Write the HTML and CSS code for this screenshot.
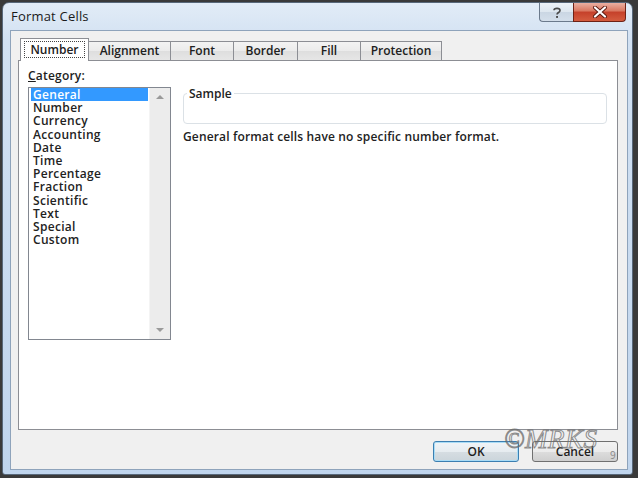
FILE: index.html
```html
<!DOCTYPE html>
<html>
<head>
<meta charset="utf-8">
<title>Format Cells</title>
<link rel="stylesheet" href="styles.css">
</head>
<body>
<div class="window">
  <div class="titlebar">
    <span class="title">Format Cells</span>
    <div class="caption">
      <div class="cap-btn help"><svg width="12" height="13" viewBox="0 0 12 13"><path d="M3 4.2 C3 1.8 9 1.6 9 4.4 C9 6.4 6 6.6 6 8.6" fill="none" stroke="#4a4a4a" stroke-width="1.6"/><rect x="5.1" y="10" width="1.9" height="1.9" fill="#4a4a4a"/></svg></div>
      <div class="cap-btn close"><svg width="16" height="12" viewBox="0 0 16 12"><path d="M3 1.5 L13 10.5 M13 1.5 L3 10.5" stroke="#5a1a10" stroke-width="4" stroke-linecap="round"/><path d="M3 1.5 L13 10.5 M13 1.5 L3 10.5" stroke="#ffffff" stroke-width="2.2" stroke-linecap="round"/></svg></div>
    </div>
  </div>
  <div class="frame-body">
    <div class="client">
      <div class="tabs">
        <div class="tab selected w-number"><span class="focus">Number</span></div>
        <div class="tab w-alignment">Alignment</div>
        <div class="tab w-font">Font</div>
        <div class="tab w-border">Border</div>
        <div class="tab w-fill">Fill</div>
        <div class="tab w-protection">Protection</div>
      </div>
      <div class="panel">
        <div class="left">
          <div class="label"><span class="ul">C</span>ategory:</div>
          <div class="listbox">
            <div class="items">
              <div class="item sel">General</div>
              <div class="item">Number</div>
              <div class="item">Currency</div>
              <div class="item">Accounting</div>
              <div class="item">Date</div>
              <div class="item">Time</div>
              <div class="item">Percentage</div>
              <div class="item">Fraction</div>
              <div class="item">Scientific</div>
              <div class="item">Text</div>
              <div class="item">Special</div>
              <div class="item">Custom</div>
            </div>
            <div class="scrollbar">
              <div class="arrow up"></div>
              <div class="arrow down"></div>
            </div>
          </div>
        </div>
        <div class="right">
          <fieldset class="sample"><legend>Sample</legend></fieldset>
          <div class="desc">General format cells have no specific number format.</div>
        </div>
      </div>
      <div class="footer">
        <div class="button default">OK</div>
        <div class="button">Cancel</div>
      </div>
    </div>
  </div>
  <div class="watermark">©MRKS</div>
  <div class="pagenum">9</div>
</div>
</body>
</html>
```

FILE: styles.css
```css
html, body {
  margin: 0;
  padding: 0;
}
body {
  width: 638px;
  height: 478px;
  overflow: hidden;
  background: #3a3a3a;
  font-family: "Open Sans", "Noto Sans", sans-serif;
  color: #1e1e1e;
}
.window {
  position: relative;
  margin: 2px 0 0 2px;
  width: 631px;
  height: 473px;
  box-sizing: border-box;
  border: 1px solid #58687a;
  border-radius: 7px 7px 3px 3px;
  background: linear-gradient(180deg, #e2ecf7 0%, #d2e1f2 8%, #c0d5ed 100%);
  display: flex;
  flex-direction: column;
}
.titlebar {
  height: 27px;
  flex: none;
  display: flex;
  justify-content: space-between;
  align-items: flex-start;
}
.title {
  padding: 4px 0 0 8px;
  font-size: 13px;
  line-height: 18px;
  letter-spacing: 0.2px;
  color: #1a1a1a;
}
.caption {
  display: flex;
  margin-right: 6px;
}
.cap-btn {
  height: 19px;
  box-sizing: border-box;
  display: flex;
  align-items: center;
  justify-content: center;
  border: 1px solid #6b7a8c;
  border-top: none;
}
.help {
  width: 34px;
  border-radius: 0 0 0 4px;
  border-right: none;
  background: linear-gradient(180deg, #eef3f8 0%, #dde6ef 50%, #cad6e3 51%, #d4dfeb 100%);
}
.close {
  width: 53px;
  border-radius: 0 0 4px 0;
  border-color: #6e2216;
  background: linear-gradient(180deg, #eab0a2 0%, #d9765f 45%, #c5402a 50%, #d45c3f 100%);
}
.frame-body {
  flex: 1;
  display: flex;
  padding: 0 4px 4px 7px;
}
.client {
  flex: 1;
  display: flex;
  flex-direction: column;
  background: #f0f0f0;
  border: 1px solid #8ea3bb;
  padding: 7px 9px 0 7px;
}
.tabs {
  height: 22px;
  display: flex;
  align-items: flex-start;
  flex: none;
}
.tab {
  box-sizing: border-box;
  height: 19px;
  margin-top: 3px;
  margin-left: -1px;
  border: 1px solid #8c8e94;
  border-bottom: none;
  background: linear-gradient(180deg, #f3f3f3 0%, #ebebeb 50%, #dedede 51%, #e6e6e6 100%);
  font-size: 12px;
  font-weight: 600;
  line-height: 15px;
  padding-top: 1px;
  text-align: center;
  color: #202020;
}
.tab.selected {
  position: relative;
  z-index: 1;
  height: 23px;
  margin-top: 0;
  margin-left: 2px;
  background: #ffffff;
  padding-top: 2px;
}
.focus {
  display: inline-block;
  border: 1px dotted #444;
  padding: 0 5px;
}
.w-number { width: 69px; }
.w-alignment { width: 83px; }
.w-font { width: 64px; }
.w-border { width: 65px; }
.w-fill { width: 64px; }
.w-protection { width: 82px; }
.panel {
  flex: none;
  height: 370px;
  box-sizing: border-box;
  background: #ffffff;
  border: 1px solid #8c8e94;
  display: flex;
  padding: 7px 10px 0 9px;
}
.left {
  display: flex;
  flex-direction: column;
}
.label {
  font-size: 12px;
  font-weight: 600;
  line-height: 15px;
  letter-spacing: 0.2px;
  margin-bottom: 4px;
}
.ul {
  text-decoration: underline;
}
.listbox {
  width: 143px;
  height: 253px;
  box-sizing: border-box;
  border: 1px solid #828790;
  display: flex;
}
.items {
  flex: 1;
  padding: 0 1px 0 2px;
}
.item {
  height: 13.2px;
  line-height: 13.2px;
  padding-left: 2px;
  font-size: 12px;
  font-weight: 600;
  letter-spacing: 0.3px;
  white-space: nowrap;
  color: #222;
}
.item.sel {
  background: #3399ff;
  color: #ffffff;
}
.scrollbar {
  width: 20px;
  background: #ececec;
  border-left: 1px solid #f4f4f4;
  display: flex;
  flex-direction: column;
  justify-content: space-between;
  align-items: center;
  padding: 7px 0 7px;
}
.arrow {
  width: 0;
  height: 0;
  border-left: 4px solid transparent;
  border-right: 4px solid transparent;
}
.arrow.up {
  border-bottom: 4px solid #9a9a9a;
}
.arrow.down {
  border-top: 4px solid #9a9a9a;
}
.right {
  flex: 1;
  margin-left: 12px;
  padding-top: 18px;
}
.sample {
  margin: 0;
  padding: 0 0 0 3px;
  height: 38px;
  box-sizing: border-box;
  border: 1px solid #dbe1e6;
  border-radius: 4px;
  min-width: 0;
}
.sample legend {
  padding: 0 2px;
  font-size: 12px;
  font-weight: 600;
  line-height: 15px;
  color: #222;
}
.desc {
  margin-top: 5px;
  font-size: 12px;
  font-weight: 600;
  line-height: 15px;
  letter-spacing: 0.15px;
  color: #222;
}
.footer {
  flex: none;
  display: flex;
  justify-content: flex-end;
  gap: 13px;
  padding-top: 11px;
}
.button {
  width: 86px;
  height: 21px;
  box-sizing: border-box;
  border: 1px solid #707070;
  border-radius: 3px;
  background: linear-gradient(180deg, #f2f2f2 0%, #ebebeb 50%, #dddddd 51%, #cfcfcf 100%);
  font-size: 12px;
  font-weight: 600;
  line-height: 19px;
  text-align: center;
  color: #1e1e1e;
}
.button.default {
  border-color: #3c7fb1;
  box-shadow: inset 0 0 0 1px #a9dcf6;
  background: linear-gradient(180deg, #f0f4f7 0%, #e6ecf0 50%, #d6dde2 51%, #cbd5db 100%);
}
.watermark {
  position: absolute;
  left: 501px;
  top: 421px;
  font-family: "Liberation Serif", serif;
  font-style: italic;
  font-size: 27px;
  line-height: 30px;
  color: rgba(255, 255, 255, 0.05);
  -webkit-text-stroke: 1px rgba(105, 105, 105, 0.75);
  letter-spacing: 0.5px;
}
.pagenum {
  position: absolute;
  left: 607px;
  top: 446px;
  font-size: 10px;
  line-height: 12px;
  color: #888;
}
```
